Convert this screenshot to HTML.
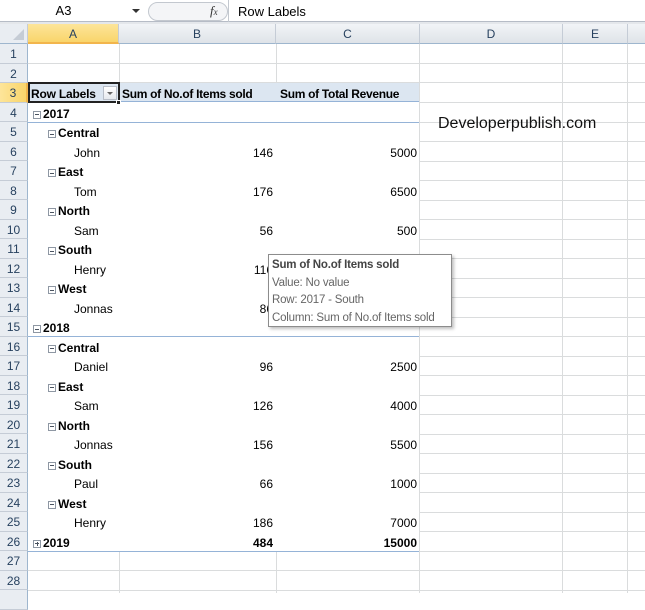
<!DOCTYPE html>
<html><head><meta charset="utf-8"><style>
*{margin:0;padding:0;box-sizing:border-box}
body{width:645px;height:593px;overflow:hidden;background:#fff;font-family:"Liberation Sans",sans-serif;font-size:12px;color:#000;position:relative}
.a{position:absolute}
.fb{left:0;top:0;width:645px;height:22px;background:#fff;border-bottom:1px solid #b6bcc6}
.ch{top:24px;height:20px;background:linear-gradient(#f2f4f7,#dfe3e8);border-bottom:1px solid #9eb6ce;color:#27415f;font-size:12px;text-align:center;line-height:21px;border-right:1px solid #c5ccd6}
.rh{left:0;width:28px;height:19.5px;background:#e9edf2;border-right:1px solid #9eb6ce;border-bottom:1px solid #c5ccd6;color:#27415f;font-size:12px;text-align:center;line-height:21px}
.hl{left:28px;width:617px;height:1px;background:#dadcdd}
.vl{width:1px;background:#dadcdd}
.t{line-height:22px;white-space:nowrap}
.b{font-weight:bold}
.r{text-align:right}
.box{display:inline-block;width:8px;height:8px;border:1px solid #8e97a3;vertical-align:-1px;margin-right:2px;position:relative;background:#fff}
.box:after{content:"";position:absolute;left:1px;top:2.5px;width:4px;height:1px;background:#4a5360}
.plus:before{content:"";position:absolute;left:2.5px;top:1px;width:1px;height:4px;background:#4a5360}
</style></head><body>
<div class="a fb"></div>
<div class="a" style="left:0;top:0;width:145px;height:22px;line-height:22px;text-align:center;font-size:13px;padding-right:18px">A3</div>
<div class="a" style="left:132px;top:9px;width:0;height:0;border-left:4px solid transparent;border-right:4px solid transparent;border-top:4px solid #333"></div>
<div class="a" style="left:148px;top:2px;width:80px;height:19px;border:1px solid #c3c8cf;border-radius:10px;background:#f4f5f7"></div>
<div class="a" style="left:228px;top:0;width:1px;height:22px;background:#c3c8cf"></div>
<div class="a" style="left:210px;top:3px;font-family:'Liberation Serif',serif;font-style:italic;font-size:13px;color:#333">f<span style="font-size:9px">x</span></div>
<div class="a" style="left:238px;top:0;line-height:23px;font-size:13px">Row Labels</div>
<div class="a" style="left:0;top:22px;width:645px;height:2px;background:#e4e7eb"></div>
<div class="a ch" style="left:0;width:28px;background:#e9edf2"></div>
<div class="a" style="left:13px;top:29px;width:0;height:0;border-left:11px solid transparent;border-bottom:11px solid #c5ccd5"></div>
<div class="a ch" style="left:28px;width:91px;background:linear-gradient(#fde59a,#f9d56b);border-bottom:2px solid #f2b54c">A</div>
<div class="a ch" style="left:119px;width:157px">B</div>
<div class="a ch" style="left:276px;width:144px">C</div>
<div class="a ch" style="left:420px;width:143px">D</div>
<div class="a ch" style="left:563px;width:65px">E</div>
<div class="a ch" style="left:628px;width:20px"></div>
<div class="a vl" style="left:119px;top:44px;height:39px"></div>
<div class="a vl" style="left:276px;top:44px;height:39px"></div>
<div class="a vl" style="left:119px;top:552px;height:41px"></div>
<div class="a vl" style="left:276px;top:552px;height:41px"></div>
<div class="a vl" style="left:419px;top:44px;height:549px"></div>
<div class="a vl" style="left:562px;top:44px;height:549px"></div>
<div class="a vl" style="left:627px;top:44px;height:549px"></div>
<div class="a hl" style="top:63px"></div>
<div class="a hl" style="top:82px"></div>
<div class="a hl" style="left:420px;width:225px;top:102px"></div>
<div class="a hl" style="left:420px;width:225px;top:122px"></div>
<div class="a hl" style="left:420px;width:225px;top:141px"></div>
<div class="a hl" style="left:420px;width:225px;top:161px"></div>
<div class="a hl" style="left:420px;width:225px;top:180px"></div>
<div class="a hl" style="left:420px;width:225px;top:200px"></div>
<div class="a hl" style="left:420px;width:225px;top:219px"></div>
<div class="a hl" style="left:420px;width:225px;top:239px"></div>
<div class="a hl" style="left:420px;width:225px;top:258px"></div>
<div class="a hl" style="left:420px;width:225px;top:278px"></div>
<div class="a hl" style="left:420px;width:225px;top:297px"></div>
<div class="a hl" style="left:420px;width:225px;top:317px"></div>
<div class="a hl" style="left:420px;width:225px;top:336px"></div>
<div class="a hl" style="left:420px;width:225px;top:356px"></div>
<div class="a hl" style="left:420px;width:225px;top:375px"></div>
<div class="a hl" style="left:420px;width:225px;top:395px"></div>
<div class="a hl" style="left:420px;width:225px;top:414px"></div>
<div class="a hl" style="left:420px;width:225px;top:434px"></div>
<div class="a hl" style="left:420px;width:225px;top:453px"></div>
<div class="a hl" style="left:420px;width:225px;top:473px"></div>
<div class="a hl" style="left:420px;width:225px;top:492px"></div>
<div class="a hl" style="left:420px;width:225px;top:512px"></div>
<div class="a hl" style="left:420px;width:225px;top:531px"></div>
<div class="a hl" style="top:551px"></div>
<div class="a hl" style="top:570px"></div>
<div class="a hl" style="top:590px"></div>
<div class="a" style="left:28px;top:83px;width:391px;height:19px;background:#dce6f1;border-bottom:1px solid #95b3d7"></div>
<div class="a" style="left:28px;top:122px;width:391px;height:1px;background:#95b3d7"></div>
<div class="a" style="left:28px;top:336px;width:391px;height:1px;background:#95b3d7"></div>
<div class="a" style="left:28px;top:551px;width:391px;height:1px;background:#95b3d7"></div>
<div class="a" style="left:28px;top:82px;width:92px;height:21px;border:2px solid #222"></div>
<div class="a" style="left:116px;top:100px;width:5px;height:5px;background:#222;border:1px solid #fff"></div>
<div class="a" style="left:103px;top:86px;width:14px;height:14px;background:linear-gradient(#fff,#e6e9ee);border:1px solid #b8bec8"></div>
<div class="a" style="left:107px;top:92px;width:0;height:0;border-left:3px solid transparent;border-right:3px solid transparent;border-top:3px solid #666"></div>
<div class="a rh" style="top:44px">1</div>
<div class="a rh" style="top:63.5px">2</div>
<div class="a rh" style="top:83px;background:linear-gradient(90deg,#fde59a,#f9d56b);border-right:2px solid #f2b54c">3</div>
<div class="a rh" style="top:102.5px">4</div>
<div class="a rh" style="top:122px">5</div>
<div class="a rh" style="top:141.5px">6</div>
<div class="a rh" style="top:161px">7</div>
<div class="a rh" style="top:180.5px">8</div>
<div class="a rh" style="top:200px">9</div>
<div class="a rh" style="top:219.5px">10</div>
<div class="a rh" style="top:239px">11</div>
<div class="a rh" style="top:258.5px">12</div>
<div class="a rh" style="top:278px">13</div>
<div class="a rh" style="top:297.5px">14</div>
<div class="a rh" style="top:317px">15</div>
<div class="a rh" style="top:336.5px">16</div>
<div class="a rh" style="top:356px">17</div>
<div class="a rh" style="top:375.5px">18</div>
<div class="a rh" style="top:395px">19</div>
<div class="a rh" style="top:414.5px">20</div>
<div class="a rh" style="top:434px">21</div>
<div class="a rh" style="top:453.5px">22</div>
<div class="a rh" style="top:473px">23</div>
<div class="a rh" style="top:492.5px">24</div>
<div class="a rh" style="top:512px">25</div>
<div class="a rh" style="top:531.5px">26</div>
<div class="a rh" style="top:551px">27</div>
<div class="a rh" style="top:570.5px">28</div>
<div class="a rh" style="top:590px"></div>
<div class="a t b" style="left:31px;top:83px;letter-spacing:-0.2px">Row Labels</div>
<div class="a t b" style="left:122px;top:83px;letter-spacing:-0.3px">Sum of No.of Items sold</div>
<div class="a t b" style="left:280px;top:83px;letter-spacing:-0.3px">Sum of Total Revenue</div>

<div class="a t b" style="left:33px;top:102.5px"><span class="box"></span>2017</div>
<div class="a t b" style="left:48px;top:122px"><span class="box"></span>Central</div>
<div class="a t" style="left:74px;top:141.5px">John</div><div class="a t r" style="right:372px;top:141.5px">146</div><div class="a t r" style="right:228px;top:141.5px">5000</div>
<div class="a t b" style="left:48px;top:161px"><span class="box"></span>East</div>
<div class="a t" style="left:74px;top:180.5px">Tom</div><div class="a t r" style="right:372px;top:180.5px">176</div><div class="a t r" style="right:228px;top:180.5px">6500</div>
<div class="a t b" style="left:48px;top:200px"><span class="box"></span>North</div>
<div class="a t" style="left:74px;top:219.5px">Sam</div><div class="a t r" style="right:372px;top:219.5px">56</div><div class="a t r" style="right:228px;top:219.5px">500</div>
<div class="a t b" style="left:48px;top:239px"><span class="box"></span>South</div>
<div class="a t" style="left:74px;top:258.5px">Henry</div><div class="a t r" style="right:372px;top:258.5px">116</div>
<div class="a t b" style="left:48px;top:278px"><span class="box"></span>West</div>
<div class="a t" style="left:74px;top:297.5px">Jonnas</div><div class="a t r" style="right:372px;top:297.5px">86</div>

<div class="a t b" style="left:33px;top:317px"><span class="box"></span>2018</div>
<div class="a t b" style="left:48px;top:336.5px"><span class="box"></span>Central</div>
<div class="a t" style="left:74px;top:356px">Daniel</div><div class="a t r" style="right:372px;top:356px">96</div><div class="a t r" style="right:228px;top:356px">2500</div>
<div class="a t b" style="left:48px;top:375.5px"><span class="box"></span>East</div>
<div class="a t" style="left:74px;top:395px">Sam</div><div class="a t r" style="right:372px;top:395px">126</div><div class="a t r" style="right:228px;top:395px">4000</div>
<div class="a t b" style="left:48px;top:414.5px"><span class="box"></span>North</div>
<div class="a t" style="left:74px;top:434px">Jonnas</div><div class="a t r" style="right:372px;top:434px">156</div><div class="a t r" style="right:228px;top:434px">5500</div>
<div class="a t b" style="left:48px;top:453.5px"><span class="box"></span>South</div>
<div class="a t" style="left:74px;top:473px">Paul</div><div class="a t r" style="right:372px;top:473px">66</div><div class="a t r" style="right:228px;top:473px">1000</div>
<div class="a t b" style="left:48px;top:492.5px"><span class="box"></span>West</div>
<div class="a t" style="left:74px;top:512px">Henry</div><div class="a t r" style="right:372px;top:512px">186</div><div class="a t r" style="right:228px;top:512px">7000</div>
<div class="a t b" style="left:33px;top:531.5px"><span class="box plus"></span>2019</div>
<div class="a t b r" style="right:372px;top:531.5px">484</div><div class="a t b r" style="right:228px;top:531.5px">15000</div>

<div class="a" style="left:438px;top:115px;font-size:16px;color:#111">Developerpublish.com</div>

<div class="a" style="left:268px;top:254px;width:184px;height:73px;background:#fff;border:1px solid #8c8c8c;box-shadow:2px 2px 3px rgba(0,0,0,.25);padding:2px 3px;line-height:17.5px;font-size:11.5px;color:#666;letter-spacing:-0.2px">
<div style="font-weight:bold;color:#444">Sum of No.of Items sold</div>
<div>Value: No value</div>
<div>Row: 2017 - South</div>
<div style="white-space:nowrap">Column: Sum of No.of Items sold</div>
</div>
</body></html>
